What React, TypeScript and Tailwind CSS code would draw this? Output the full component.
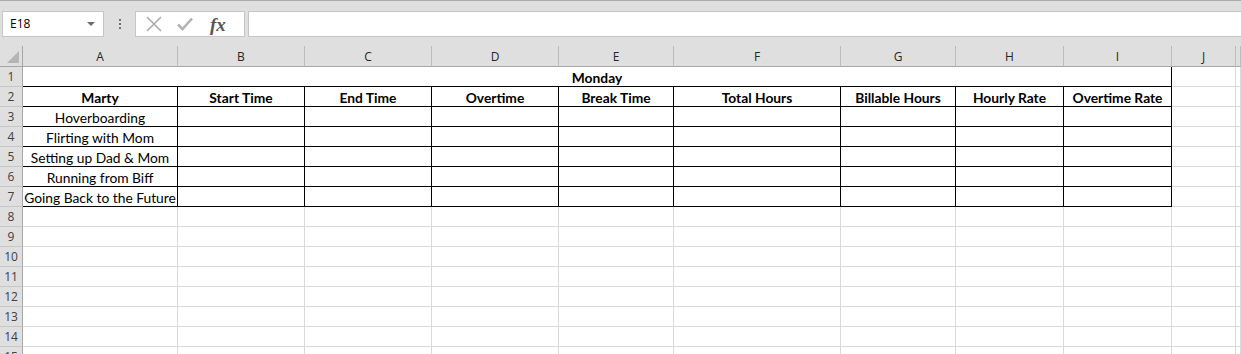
import clsx from 'clsx';

const columns = ['A', 'B', 'C', 'D', 'E', 'F', 'G', 'H', 'I', 'J', ''];
const headers = [
  'Marty',
  'Start Time',
  'End Time',
  'Overtime',
  'Break Time',
  'Total Hours',
  'Billable Hours',
  'Hourly Rate',
  'Overtime Rate',
];
const tasks = [
  'Hoverboarding',
  'Flirting with Mom',
  'Setting up Dad & Mom',
  'Running from Biff',
  'Going Back to the Future',
];
const rows = Array.from({ length: 15 }, (_, i) => i + 1);

const cellFont = { fontFamily: 'Lato, "Liberation Sans", sans-serif' };
const uiFont = { fontFamily: '"Open Sans", "Noto Sans", sans-serif' };

const RowHeader = ({ n }: { n: number }) => (
  <div
    className="h-5 bg-[#dfdfdf] border-r border-b border-r-[#a6a6a6] border-b-[#c6c6c6] flex items-center justify-center pt-px text-[12px] text-[#404040]"
    style={uiFont}
  >
    {n}
  </div>
);

const Cell = ({
  children,
  boxed,
  bold,
}: {
  children?: React.ReactNode;
  boxed?: boolean;
  bold?: boolean;
}) => (
  <div
    className={clsx(
      'h-5 border-r border-b flex items-center justify-center pt-[2px] whitespace-nowrap text-[13.8px] text-black leading-none',
      boxed ? 'border-black' : 'border-[#d9d9d9]',
      bold && 'font-bold',
    )}
    style={cellFont}
  >
    {children}
  </div>
);

const FormulaBar = () => (
  <div className="h-[46px] bg-[#dfdfdf] border-t border-[#ababab] flex items-start pt-[10px] pl-[2px]">
    {/* Name box */}
    <div className="w-[102px] h-[26px] bg-white border border-[#c6c6c6] flex items-center justify-between pl-[7px] pr-[8px]">
      <span className="text-[12px] text-black" style={uiFont}>
        E18
      </span>
      <svg width="8" height="4" viewBox="0 0 8 4">
        <path d="M0 0h8L4 4z" fill="#6b6b6b" />
      </svg>
    </div>
    <div className="w-[31px] h-[26px] flex flex-col items-center justify-center gap-[2px]">
      <span className="w-[2px] h-[2px] bg-[#777]" />
      <span className="w-[2px] h-[2px] bg-[#777]" />
      <span className="w-[2px] h-[2px] bg-[#777]" />
    </div>
    {/* Cancel / enter / fx */}
    <div className="w-[110px] h-[26px] bg-white border border-[#c6c6c6] flex items-center">
      <svg width="18" height="18" viewBox="0 0 18 18" className="ml-[9px]">
        <path d="M2 2L16 16M16 2L2 16" stroke="#ababab" strokeWidth="1.6" />
      </svg>
      <svg width="18" height="18" viewBox="0 0 18 18" className="ml-[13px]">
        <path d="M2 9.5L6.5 14L16 3.5" stroke="#b3b3b3" strokeWidth="2.6" fill="none" />
      </svg>
      <span
        className="ml-[16px] italic font-bold text-[19px] text-[#555] leading-none"
        style={{ fontFamily: '"Liberation Serif", serif' }}
      >
        fx
      </span>
    </div>
    <div className="ml-[3px] flex-1 h-[26px] bg-white border border-r-0 border-[#c6c6c6]" />
  </div>
);

export default function App() {
  return (
    <div className="w-[1241px] h-[354px] overflow-hidden bg-white">
      <FormulaBar />
      <div className="grid grid-cols-[23px_155px_127px_127px_127px_115px_167px_115px_108px_108px_64px_1fr]">
        {/* Corner */}
        <div className="h-[21px] bg-[#dfdfdf] border-r border-b border-[#a6a6a6] flex items-end justify-end pr-[3px] pb-[3px]">
          <svg width="12" height="12" viewBox="0 0 12 12">
            <path d="M12 0V12H0z" fill="#b5b5b5" />
          </svg>
        </div>
        {columns.map((c, i) => (
          <div
            key={i}
            className="h-[21px] bg-[#dfdfdf] border-r border-b border-r-[#bdbdbd] border-b-[#a6a6a6] flex items-center justify-center pt-px text-[12px] text-[#262626]"
            style={uiFont}
          >
            {c}
          </div>
        ))}

        {rows.map((r) => {
          if (r === 1) {
            return [
              <RowHeader key="h1" n={1} />,
              <div
                key="m"
                className="col-span-9 h-5 border-r border-b border-black flex items-center justify-center pt-[2px] font-bold text-[13.8px] leading-none"
                style={cellFont}
              >
                Monday
              </div>,
              <Cell key="j1" />,
              <Cell key="k1" />,
            ];
          }
          const inTable = r >= 2 && r <= 7;
          return [
            <RowHeader key={`h${r}`} n={r} />,
            ...columns.map((_, ci) => {
              let content: React.ReactNode = null;
              if (r === 2 && ci < 9) content = headers[ci];
              if (r > 2 && r <= 7 && ci === 0) content = tasks[r - 3];
              return (
                <Cell key={`${r}-${ci}`} boxed={inTable && ci < 9} bold={r === 2}>
                  {content}
                </Cell>
              );
            }),
          ];
        })}
      </div>
    </div>
  );
}
